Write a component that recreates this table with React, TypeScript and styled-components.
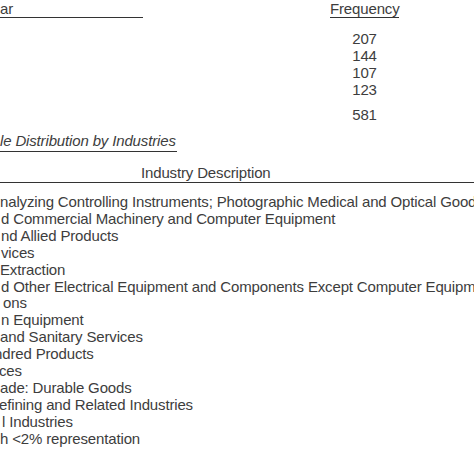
import { createGlobalStyle, styled } from "styled-components";

const GlobalStyle = createGlobalStyle`
  html, body {
    margin: 0;
    padding: 0;
    background: #ffffff;
  }
  body {
    font-family: "Liberation Sans", Arial, Helvetica, sans-serif;
    color: #3d3d3d;
  }
`;

const counts = [
  { value: "207" },
  { value: "144" },
  { value: "107" },
  { value: "123" },
];

// each row is the visible tail of a longer label; cut pulls the start past the clip edge
const industries = [
  { label: "nalyzing Controlling Instruments; Photographic Medical and Optical Goods", cut: 0 },
  { label: "d Commercial Machinery and Computer Equipment", cut: 1 },
  { label: "nd Allied Products", cut: 1 },
  { label: "vices", cut: 1 },
  { label: "Extraction", cut: 0 },
  { label: "d Other Electrical Equipment and Components Except Computer Equipment", cut: 1 },
  { label: "ons", cut: 3 },
  { label: "n Equipment", cut: 1 },
  { label: "and Sanitary Services", cut: 0 },
  { label: "ndred Products", cut: -6 },
  { label: "ces", cut: -1 },
  { label: "ade: Durable Goods", cut: 0 },
  { label: "efining and Related Industries", cut: -1 },
  { label: "l Industries", cut: 2 },
  { label: "h <2% representation", cut: 0 },
];

export default function App() {
  return (
    <>
      <GlobalStyle />
      <Page>
        <YearTable>
          <HeadRow>
            <YearHead>ar</YearHead>
            <Spacer />
            <FreqHead>Frequency</FreqHead>
          </HeadRow>
          <CountList>
            {counts.map((c) => (
              <CountRow key={c.value}>
                <Spacer />
                <Spacer />
                <Count>{c.value}</Count>
              </CountRow>
            ))}
            <CountRow $total>
              <Spacer />
              <Spacer />
              <Count>581</Count>
            </CountRow>
          </CountList>
        </YearTable>

        <Caption>le Distribution by Industries</Caption>

        <IndustryTable>
          <IndustryHead>Industry Description</IndustryHead>
          <IndustryList>
            {industries.map((row) => (
              <IndustryRow key={row.label} $cut={row.cut}>
                {row.label}
              </IndustryRow>
            ))}
          </IndustryList>
        </IndustryTable>
      </Page>
    </>
  );
}

const Page = styled.div`
  width: 474px;
  height: 474px;
  overflow: hidden;
  font-size: 15px;
  letter-spacing: -0.15px;
  line-height: 17px;
  display: flex;
  flex-direction: column;
`;

const YearTable = styled.section`
  display: flex;
  flex-direction: column;
`;

const HeadRow = styled.div`
  display: grid;
  grid-template-columns: 143px 187px 69px;
  align-items: end;
`;

const YearHead = styled.div`
  margin-left: -1px;
  padding-left: 1px;
  border-bottom: 1.3px solid #333;
  white-space: nowrap;
`;

const FreqHead = styled.div`
  border-bottom: 1.3px solid #333;
  white-space: nowrap;
  text-align: center;
`;

const Spacer = styled.div``;

const CountList = styled.div`
  display: flex;
  flex-direction: column;
  padding-top: 12px;
`;

const CountRow = styled.div<{ $total?: boolean }>`
  display: grid;
  grid-template-columns: 143px 187px 69px;
  margin-top: ${(p) => (p.$total ? "8px" : "0")};
`;

const Count = styled.div`
  text-align: center;
`;

const Caption = styled.div`
  align-self: flex-start;
  margin-top: 9px;
  padding-bottom: 2px;
  padding-right: 1px;
  font-style: italic;
  border-bottom: 1.3px solid #333;
  white-space: nowrap;
`;

const IndustryTable = styled.section`
  display: flex;
  flex-direction: column;
  margin-top: 12px;
`;

const IndustryHead = styled.div`
  padding-left: 141px;
  padding-bottom: 1px;
  border-bottom: 1.3px solid #333;
  white-space: nowrap;
`;

const IndustryList = styled.div`
  display: flex;
  flex-direction: column;
  padding-top: 11px;
`;

const IndustryRow = styled.div<{ $cut: number }>`
  margin-left: ${(p) => p.$cut}px;
  line-height: 16.9px;
  white-space: nowrap;
`;
